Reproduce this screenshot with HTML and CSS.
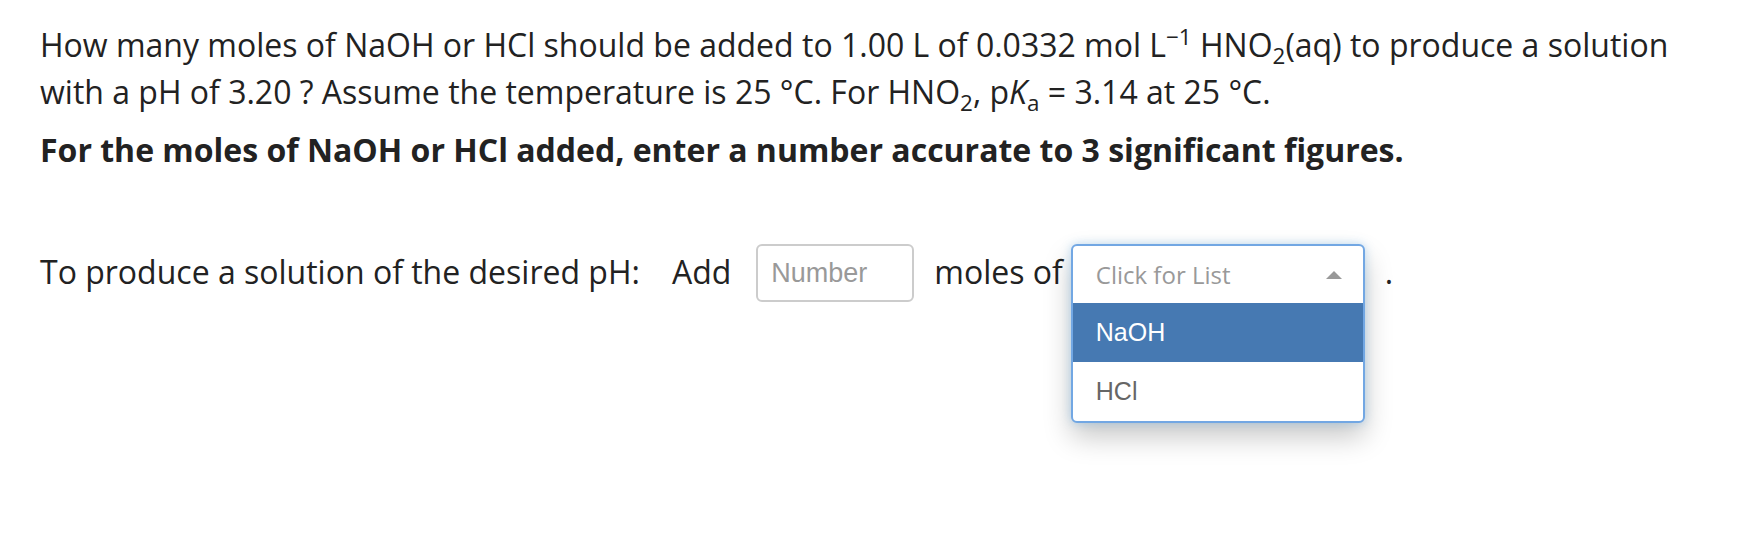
FILE: index.html
```html
<!DOCTYPE html>
<html lang="en">
  <head>
    <meta charset="UTF-8" />
    <title>Buffer Question</title>
    <link rel="stylesheet" href="styles.css">
  </head>
  <body>
    <div class="question">
      <p class="prompt">
        How many moles of NaOH or HCl should be added to 1.00 L of 0.0332 mol L<sup>&minus;1</sup> HNO<sub>2</sub>(aq) to produce a solution
        with a pH of 3.20 ? Assume the temperature is 25 &deg;C. For HNO<sub>2</sub>, p<i>K</i><sub>a</sub> = 3.14 at 25 &deg;C.
      </p>
      <p class="instruction">For the moles of NaOH or HCl added, enter a number accurate to 3 significant figures.</p>

      <div class="answer-row">
        <span class="label">To produce a solution of the desired pH:</span>
        <span class="label add">Add</span>
        <input type="text" class="number-input" placeholder="Number" />
        <span class="label moles">moles of</span>
        <div class="dropdown open">
          <div class="dropdown-head">
            <span>Click for List</span>
            <span class="caret"></span>
          </div>
          <ul class="dropdown-list">
            <li class="active">NaOH</li>
            <li>HCl</li>
          </ul>
        </div>
        <span class="label dot">.</span>
      </div>
    </div>
  </body>
</html>
```

FILE: styles.css
```css
* {
  box-sizing: border-box;
}

body {
  margin: 0;
  background: #fff;
  color: #222;
  font-family: "Open Sans", sans-serif;
  font-size: 32px;
}

.question {
  padding: 21px 40px 60px 40px;
}

.prompt {
  margin: 0;
  line-height: 47px;
  width: 1660px;
}

sup,
sub {
  font-size: 70%;
  line-height: 0;
}

sup {
  vertical-align: 0.55em;
}

sub {
  vertical-align: -0.3em;
}

.instruction {
  margin: 11px 0 0 0;
  line-height: 47px;
  font-weight: bold;
}

.answer-row {
  display: flex;
  align-items: flex-start;
  margin-top: 71px;
}

.label {
  line-height: 55px;
  white-space: nowrap;
}

.add {
  margin-left: 32px;
}

.number-input {
  width: 158px;
  height: 58px;
  margin-left: 25px;
  padding: 0 13px;
  border: 2px solid #ccc;
  border-radius: 6px;
  font-family: "Liberation Sans", Arial, sans-serif;
  font-size: 27px;
  color: #555;
}

.number-input::placeholder {
  color: #999;
}

.moles {
  margin-left: 20px;
}

.dropdown {
  width: 294px;
  margin-left: 8px;
  border: 2px solid #72a7e3;
  border-radius: 6px;
  background: #fff;
  box-shadow: 0 0 10px rgba(102, 175, 233, 0.4), 0 14px 28px rgba(0, 0, 0, 0.22);
}

.dropdown-head {
  display: flex;
  align-items: center;
  justify-content: space-between;
  height: 57px;
  padding: 0 21px 0 23px;
  font-size: 24px;
  color: #999;
}

.caret {
  width: 0;
  height: 0;
  border-left: 8px solid transparent;
  border-right: 8px solid transparent;
  border-bottom: 8px solid #999;
}

.dropdown-list {
  list-style: none;
  margin: 0;
  padding: 0;
  font-family: "Liberation Sans", Arial, sans-serif;
  font-size: 25px;
  color: #666;
}

.dropdown-list li {
  height: 59px;
  line-height: 59px;
  padding-left: 23px;
}

.dropdown-list li.active {
  background: #4679b2;
  color: #fff;
}

.dot {
  margin-left: 20px;
}
```
